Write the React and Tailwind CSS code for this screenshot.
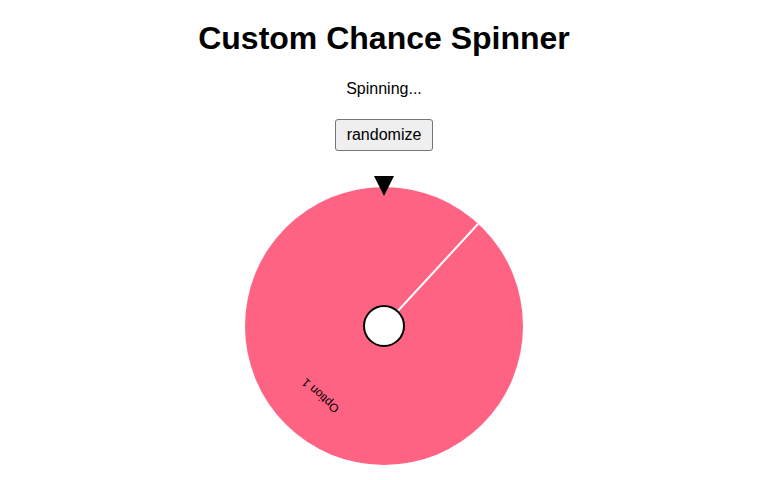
import React from 'react';

const Wheel = () => (
  <svg width="280" height="300" viewBox="0 0 280 300" className="block">
    <circle cx="140" cy="150" r="139" fill="#ff6384" />
    <line x1="140" y1="150" x2="234" y2="48" stroke="#ffffff" strokeWidth="2" />
    <text
      x="77"
      y="219"
      fontSize="12"
      fontFamily="'Liberation Sans', Arial, sans-serif"
      fill="#000"
      textAnchor="middle"
      dominantBaseline="middle"
      transform="rotate(222 77 219)"
    >
      Option 1
    </text>
    <circle cx="140" cy="150" r="20" fill="#ffffff" stroke="#000" strokeWidth="2" />
    <polygon points="130,0 150,0 140,20" fill="#000" />
  </svg>
);

export default function App() {
  return (
    <div className="flex flex-col items-center bg-white min-h-[480px] font-['Liberation_Sans',Arial,sans-serif] text-black">
      <h1 className="mt-[20px] text-[32px] leading-[37px] font-bold">Custom Chance Spinner</h1>
      <p className="mt-[23px] text-[16px] leading-[18px]">Spinning...</p>
      <button className="mt-[21px] h-[32px] px-[11px] text-[16px] bg-[#efefef] border border-[#767676] rounded-[3px]">
        randomize
      </button>
      <div className="mt-[25px]">
        <Wheel />
      </div>
    </div>
  );
}
